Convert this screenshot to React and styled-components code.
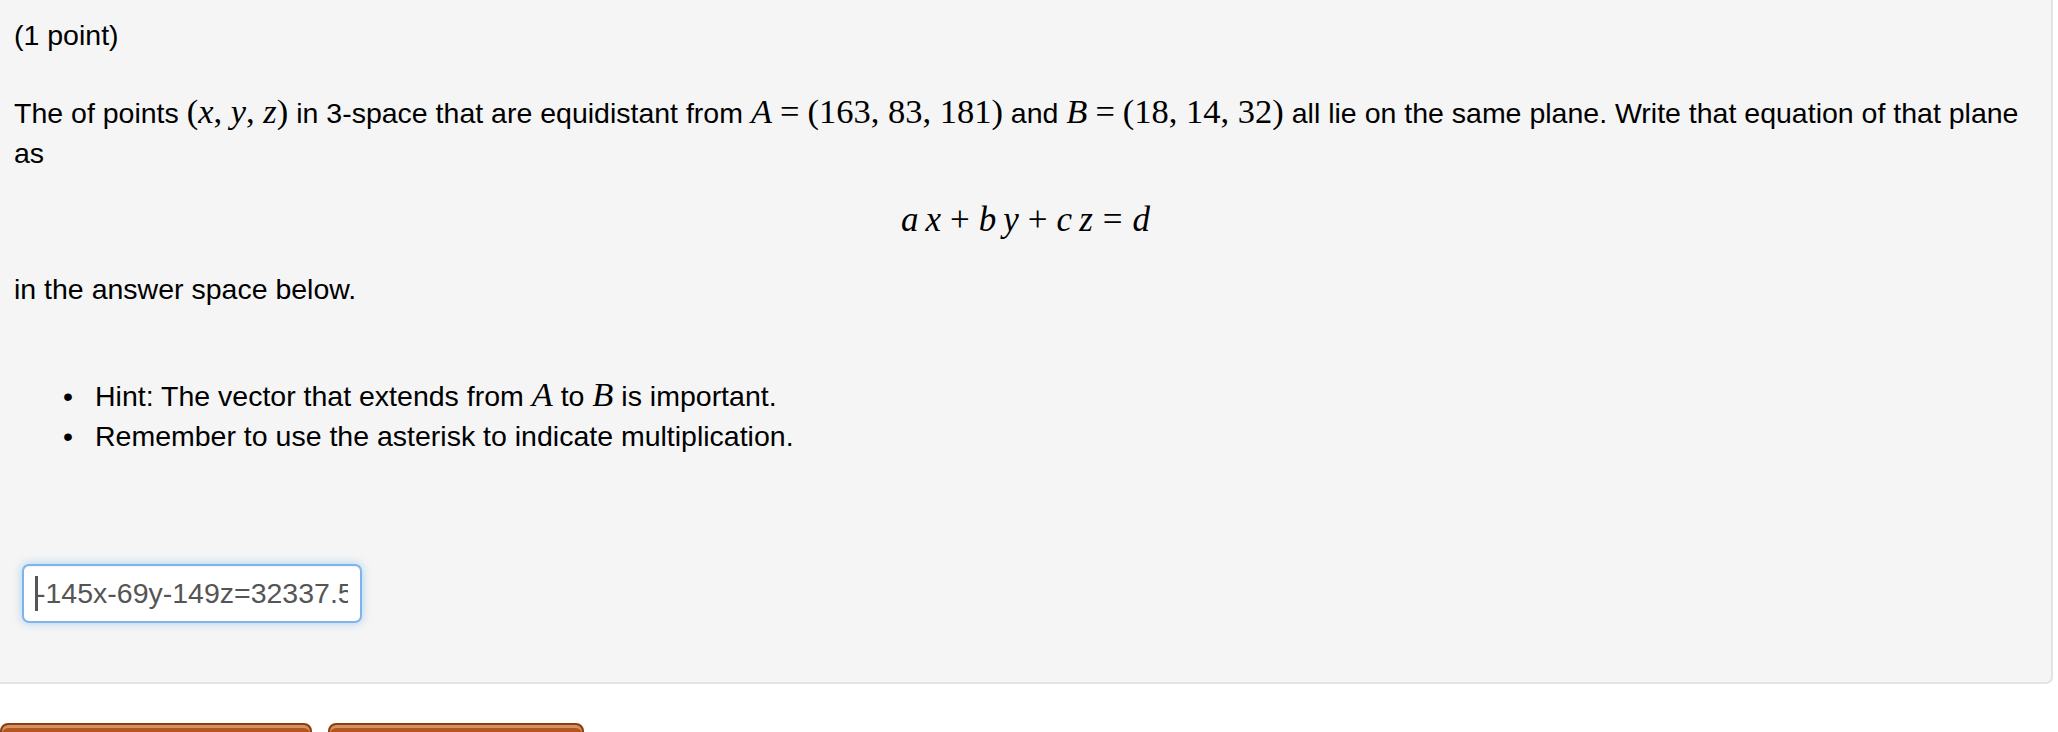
import React from 'react'
import styled, { createGlobalStyle } from 'styled-components'

const Global = createGlobalStyle`
    html, body {
        margin: 0;
        padding: 0;
        background: #ffffff;
    }
    body {
        font-family: "Liberation Sans", Arial, Helvetica, sans-serif;
        color: #000;
    }
`;

const Page = styled.div`
    height: 100vh;
    overflow: hidden;
`;

const Panel = styled.div`
    width: 2053px;
    box-sizing: border-box;
    background-color: #f5f5f5;
    border-right: 2px solid #e3e3e3;
    border-bottom: 2px solid #e3e3e3;
    border-bottom-right-radius: 7px;
    padding: 15px 14px 59px 14px;
    font-size: 28.5px;
    line-height: 40px;
`;

const Points = styled.div`
    margin-bottom: 38px;
`;

const Para = styled.div`
    margin-top: ${p => p.$top || 0}px;
    padding-right: 10px;
`;

const Math = styled.span`
    font-family: "Liberation Serif", "Times New Roman", serif;
    font-size: 34.5px;
    line-height: 1;
    white-space: nowrap;
`;

const V = styled.i`
    font-style: italic;
    margin-right: ${p => p.$gap || 0}px;
`;

const Op = styled.span`
    margin: 0 ${p => p.$space || 7}px;
`;

const Display = styled.div`
    margin-top: 27px;
    text-align: center;
    font-family: "Liberation Serif", "Times New Roman", serif;
    font-size: 35px;
`;

const Hints = styled.ul`
    margin: 67px 0 0 0;
    padding-left: 81px;
    list-style: none;
`;

const Hint = styled.li`
    position: relative;

    &::before {
        content: "•";
        position: absolute;
        left: -32px;
        top: 0;
    }
`;

const AnswerWrap = styled.div`
    position: relative;
    margin: 108px 0 0 8px;
    width: 340px;
`;

const Answer = styled.input`
    display: block;
    width: 340px;
    height: 59px;
    box-sizing: border-box;
    padding: 0 12px;
    border: 2px solid #80b3ec;
    border-radius: 7px;
    background: #fff;
    color: #555;
    font-family: "Liberation Sans", Arial, Helvetica, sans-serif;
    font-size: 28.5px;
    caret-color: transparent;
    outline: none;
    box-shadow: inset 0 1px 1px rgba(0,0,0,0.06), 0 0 10px rgba(102,175,233,0.55);
`;

const Caret = styled.span`
    position: absolute;
    left: 13px;
    top: 12px;
    width: 3px;
    height: 35px;
    background: #555;
`;

const Buttons = styled.div`
    display: flex;
    gap: 16px;
    margin-top: 39px;
`;

const Btn = styled.button`
    width: ${p => p.$w}px;
    height: 70px;
    box-sizing: border-box;
    padding: 26px 0 0 0;
    border: 2px solid #8e3f12;
    border-radius: 8px;
    background: #b5561f;
    box-shadow: inset 0 3px 0 rgba(255,220,190,0.45);
    color: #fff;
    font-family: "Liberation Sans", Arial, Helvetica, sans-serif;
    font-size: 26px;
    line-height: 40px;
`;

const App = () => {
  return (
    <Page>
      <Global />
      <Panel>
        <Points>(1 point)</Points>
        <Para>
          The of points <Math>(<V>x</V>, <V>y</V>, <V>z</V>)</Math> in 3-space that are equidistant from{' '}
          <Math><V>A</V><Op $space={8}>=</Op>(163, 83, 181)</Math> and{' '}
          <Math><V>B</V><Op $space={8}>=</Op>(18, 14, 32)</Math> all lie on the same plane. Write that equation of that plane as
        </Para>
        <Display>
          <V $gap={7}>a</V><V>x</V><Op $space={9}>+</Op><V $gap={7}>b</V><V>y</V><Op $space={9}>+</Op><V $gap={7}>c</V><V>z</V><Op $space={10}>=</Op><V>d</V>
        </Display>
        <Para $top={29}>in the answer space below.</Para>
        <Hints>
          <Hint>Hint: The vector that extends from <Math><V>A</V></Math> to <Math><V>B</V></Math> is important.</Hint>
          <Hint>Remember to use the asterisk to indicate multiplication.</Hint>
        </Hints>
        <AnswerWrap>
          <Answer type="text" readOnly value="-145x-69y-149z=32337.5" />
          <Caret />
        </AnswerWrap>
      </Panel>
      <Buttons>
        <Btn $w={312}>Preview My Answers</Btn>
        <Btn $w={256}>Submit Answers</Btn>
      </Buttons>
    </Page>
  )
}

export default App
